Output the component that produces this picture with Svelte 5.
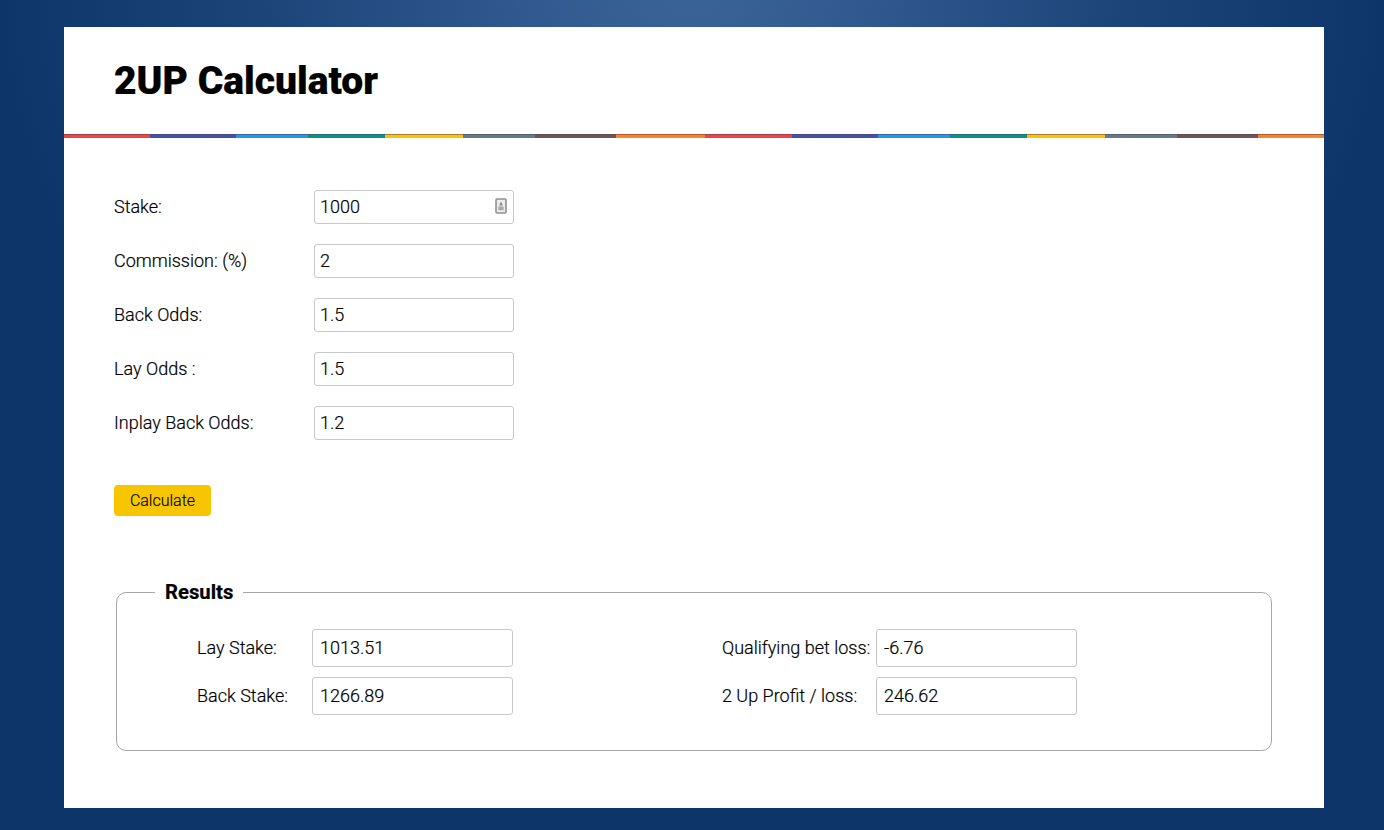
<script>
  const fields = [
    { label: 'Stake:', value: '1000', icon: true },
    { label: 'Commission: (%)', value: '2' },
    { label: 'Back Odds:', value: '1.5' },
    { label: 'Lay Odds :', value: '1.5' },
    { label: 'Inplay Back Odds:', value: '1.2' }
  ];
  const stripes = [
    ['#f44141', 86], ['#3f51b5', 86], ['#2196f3', 72], ['#009688', 77], ['#ffc107', 78], ['#607d8b', 72], ['#705558', 81], ['#ff8126', 89],
    ['#f44141', 87], ['#3f51b5', 86], ['#2196f3', 72], ['#009688', 77], ['#ffc107', 78], ['#607d8b', 72], ['#705558', 81], ['#ff8126', 66]
  ];
  const results = [
    { label: 'Lay Stake:', value: '1013.51' },
    { label: 'Qualifying bet loss:', value: '-6.76' },
    { label: 'Back Stake:', value: '1266.89' },
    { label: '2 Up Profit / loss:', value: '246.62' }
  ];
</script>

<main class="card">
  <header class="head"><h1>2UP Calculator</h1></header>
  <div class="stripe">
    {#each stripes as [color, width]}
      <span style="background:{color};width:{width}px"></span>
    {/each}
  </div>
  <form class="form">
    {#each fields as f}
      <div class="row">
        <label for={f.label}>{f.label}</label>
        <div class="inputwrap">
          <input id={f.label} value={f.value} />
          {#if f.icon}
            <svg class="keyicon" width="12" height="16" viewBox="0 0 12 16" aria-hidden="true">
              <rect x="1" y="1" width="10" height="14" rx="1" fill="#ececec" stroke="#8f8f8f" stroke-width="1.6"/>
              <path d="M6 3.4 7.8 7.4H4.2Z" fill="#8a8a8a"/>
              <rect x="3.4" y="8.4" width="5.2" height="3.8" fill="#a8a8a8"/>
            </svg>
          {/if}
        </div>
      </div>
    {/each}
    <button type="button" class="calc">Calculate</button>
  </form>
  <fieldset class="results">
    <legend>Results</legend>
    <div class="grid">
      {#each results as r}
        <div class="res">
          <span class="reslabel">{r.label}</span>
          <input value={r.value} aria-label={r.label} />
        </div>
      {/each}
    </div>
  </fieldset>
</main>

<style>
  :global(body) {
    margin: 0;
    background: #0d3569;
    background-image: radial-gradient(ellipse 700px 620px at 692px -20px, #3b6498 0%, #31598f 25%, #1c4479 62%, #0d3569 100%);
    background-repeat: no-repeat;
    min-height: 830px;
  }
  .card {
    box-sizing: border-box;
    width: 1260px;
    height: 781px;
    margin: 27px 0 22px 64px;
    background: #fff;
    font-family: Roboto, sans-serif;
    font-weight: 300;
    color: #000;
    font-size: 18px;
    -webkit-text-stroke: 0.2px currentColor;
  }
  .head {
    height: 107px;
    padding-left: 50px;
    display: flex;
    align-items: center;
  }
  h1 {
    margin: 1px 0 0;
    font-size: 39px;
    font-weight: 900;
    line-height: 44px;
  }
  .stripe { display: flex; height: 4px; }
  .stripe span { display: block; height: 4px; flex: none; box-shadow: inset 0 1px rgba(85, 65, 75, 0.5); }
  .form {
    padding: 52px 0 0 50px;
    display: flex;
    flex-direction: column;
    align-items: flex-start;
  }
  .row {
    display: flex;
    align-items: center;
    height: 34px;
    margin-bottom: 20px;
  }
  .row label { width: 200px; padding-bottom: 2px; }
  .inputwrap { position: relative; width: 200px; height: 34px; }
  input {
    box-sizing: border-box;
    font-family: Roboto, sans-serif;
    font-weight: 300;
    font-size: 18px;
    color: #000;
    -webkit-text-stroke: 0.2px currentColor;
    border: 1px solid #c8c8c8;
    border-radius: 3px;
    background: #fff;
    outline: none;
    margin: 0;
  }
  .inputwrap input {
    width: 200px;
    height: 34px;
    padding: 0 5px 2px;
  }
  .keyicon { position: absolute; right: 7px; top: 8px; }
  .calc {
    margin-top: 25px;
    width: 97px;
    height: 31px;
    border: 0;
    border-radius: 4px;
    background: #f7c600;
    font-family: Roboto, sans-serif;
    font-weight: 300;
    font-size: 16px;
    color: #000;
    -webkit-text-stroke: 0.15px currentColor;
    padding: 0;
  }
  .results {
    box-sizing: border-box;
    width: 1156px;
    height: 170px;
    margin: 65px 0 0 52px;
    padding: 26px 0 0 80px;
    border: 1px solid #a8a8a8;
    border-radius: 10px;
    min-width: 0;
  }
  legend {
    margin-left: -42px;
    padding: 0 10px;
    font-size: 20.3px;
    font-weight: 700;
    line-height: 22px;
  }
  .grid {
    display: grid;
    grid-template-columns: 525px auto;
    row-gap: 10px;
  }
  .res { display: flex; align-items: center; height: 38px; }
  .reslabel { width: 115px; white-space: nowrap; padding-bottom: 2px; }
  .res:nth-child(even) .reslabel { width: 154px; }
  .res input {
    width: 201px;
    height: 38px;
    padding: 0 7px 2px;
  }
</style>
